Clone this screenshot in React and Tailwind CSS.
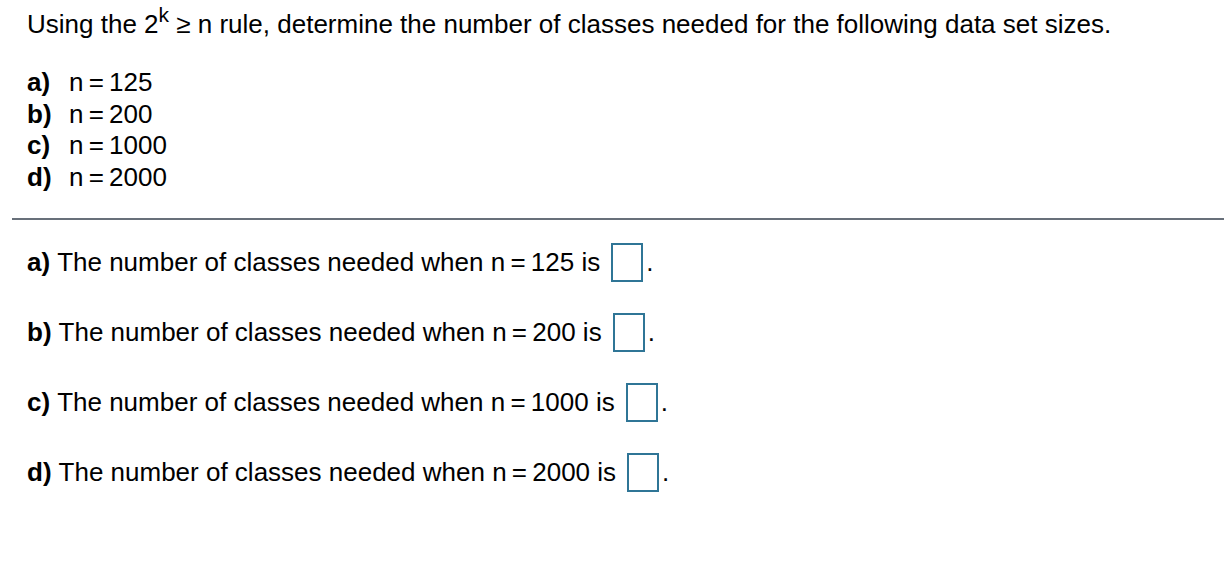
import React from "react";

const items = [
  { label: "a)", n: "125" },
  { label: "b)", n: "200" },
  { label: "c)", n: "1000" },
  { label: "d)", n: "2000" },
];

const AnswerBox = () => (
  <span className="inline-block w-[32px] h-[39px] border-2 border-[#2f7596] bg-white ml-[11px] mr-[3px]" />
);

export default function App() {
  return (
    <div
      className="w-[1224px] h-[588px] bg-white text-black text-[26px] overflow-hidden"
      style={{ fontFamily: '"Liberation Sans", Arial, sans-serif' }}
    >
      <div className="pl-[27px] pt-[9px] leading-[30px]">
        Using the 2
        <span className="text-[21px] leading-none relative -top-[11px]">k</span> ≥ n rule,
        determine the number of classes needed for the following data set sizes.
      </div>

      <div className="pl-[27px] pt-[28px] leading-[31.5px]">
        {items.map((it) => (
          <div key={it.label} className="flex">
            <span className="font-bold w-[42px]">{it.label}</span>
            <span>n{"\u2009"}={"\u2009"}{it.n}</span>
          </div>
        ))}
      </div>

      <div className="ml-[12px] mt-[25px] h-[2px] bg-[#68707a]" />

      <div className="pl-[27px] pt-[23px] flex flex-col gap-[31px]">
        {items.map((it) => (
          <div key={it.label} className="flex items-center h-[39px]">
            <span className="font-bold mr-[7px]">{it.label}</span>
            <span>The number of classes needed when n{"\u2009"}={"\u2009"}{it.n} is</span>
            <AnswerBox />
            <span>.</span>
          </div>
        ))}
      </div>
    </div>
  );
}
